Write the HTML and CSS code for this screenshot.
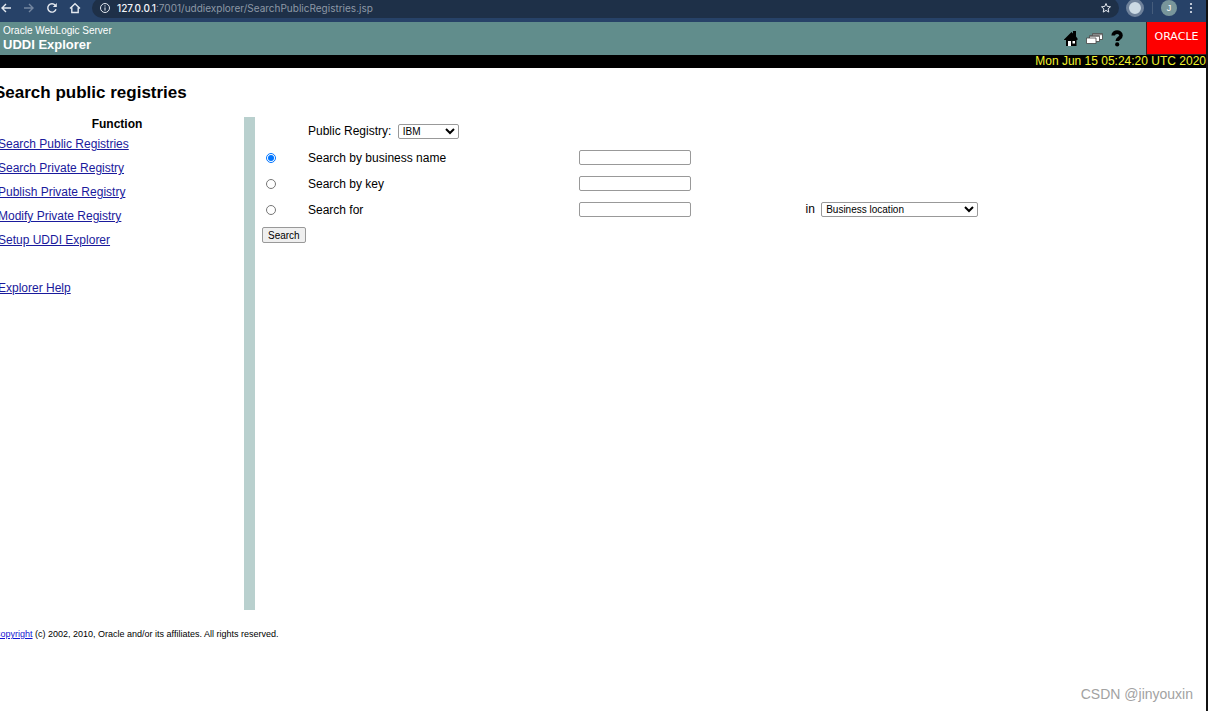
FILE: index.html
```html
<!DOCTYPE html>
<html lang="en">
<head>
<meta charset="utf-8">
<title>UDDI Explorer</title>
<link rel="stylesheet" href="styles.css">
</head>
<body>
<div class="window">
  <div class="toolbar">
    <div class="nav">
      <button type="button" class="tool" aria-label="Back"><svg viewBox="0 0 12 12"><path d="M11 6H2M6 2L2 6l4 4"/></svg></button>
      <button type="button" class="tool dim" aria-label="Forward"><svg viewBox="0 0 12 12"><path d="M1 6h9M6 2l4 4-4 4"/></svg></button>
      <button type="button" class="tool" aria-label="Reload"><svg viewBox="0 0 12 12"><path d="M10 7.2A4.2 4.2 0 1 1 9.2 3.2"/><path class="solid" d="M10.8 1v4H6.8z"/></svg></button>
      <button type="button" class="tool" aria-label="Home"><svg viewBox="0 0 12 12"><path d="M1 6.4L6 1.8l5 4.6M2.8 5.5v5h6.4v-5"/></svg></button>
    </div>
    <div class="address">
      <svg class="info" viewBox="0 0 12 12"><circle cx="6" cy="6" r="4.5"/><path d="M6 5.4v3.2M6 3.3v1.2"/></svg>
      <span class="url"><span class="host">127.0.0.1</span>:7001/uddiexplorer/SearchPublicRegistries.jsp</span>
      <button type="button" class="tool star" aria-label="Bookmark"><svg viewBox="0 0 12 12"><path d="M6 1.5l1.3 3 3.2.3-2.4 2.1.7 3.2L6 8.4l-2.8 1.7.7-3.2L1.5 4.8l3.2-.3z"/></svg></button>
    </div>
    <div class="extras">
      <span class="extension"></span>
      <span class="divider"></span>
      <span class="avatar">J</span>
      <button type="button" class="tool" aria-label="Menu"><svg viewBox="0 0 12 12"><g class="dots"><circle cx="6" cy="2" r="1.1"/><circle cx="6" cy="6" r="1.1"/><circle cx="6" cy="10" r="1.1"/></g></svg></button>
    </div>
  </div>

  <header class="banner">
    <div class="brand">
      <div class="product">Oracle WebLogic Server</div>
      <div class="app">UDDI Explorer</div>
    </div>
    <div class="shortcuts">
      <a href="#" aria-label="Home"><svg viewBox="0 0 18 18"><path d="M2 9.500L9.500 2l1.500 1.500V1h3v5.500l1.500 2V10H14.500v6H4v-6H2z" fill="#000"/><path d="M6 11h3v5H6zM10.500 11h2.500v2.500h-2.500z" fill="#fff"/></svg></a>
      <a href="#" aria-label="Windows"><svg viewBox="0 0 18 18"><g stroke="#444" stroke-width=".8" fill="#fff"><path d="M7.500 3.500h10v6h-10z"/><path d="M4.500 5.500h10v6h-10z"/><path d="M1.500 8h9.500v5.500H1.500z"/></g><path d="M8 4h9v1.200H8zM5 6h9v1H5z" fill="#888"/></svg></a>
      <a href="#" aria-label="Help"><svg viewBox="0 0 18 18"><path d="M5.200 5.500C5.200 1 13 1 13 5.500c0 2.800-3.700 2.800-3.700 5.500" fill="none" stroke="#000" stroke-width="3.600"/><circle cx="9.200" cy="14.400" r="2.100"/></svg></a>
    </div>
    <div class="logo">ORACLE</div>
  </header>
  <div class="clock">Mon Jun 15 05:24:20 UTC 2020</div>

  <div class="page">
    <h1 class="title">Search public registries</h1>
    <div class="columns">
      <nav class="functions">
        <h2 class="functions-title">Function</h2>
        <a href="#">Search Public Registries</a>
        <a href="#">Search Private Registry</a>
        <a href="#">Publish Private Registry</a>
        <a href="#">Modify Private Registry</a>
        <a href="#">Setup UDDI Explorer</a>
        <a href="#" class="help">Explorer Help</a>
      </nav>
      <form class="search">
        <table class="fields">
          <colgroup><col class="c-radio"><col class="c-label"><col class="c-input"><col></colgroup>
          <tr>
            <td></td>
            <td><label for="registry">Public Registry:</label> <select id="registry" class="registry"><option>IBM</option></select></td>
            <td></td><td></td>
          </tr>
          <tr>
            <td><input type="radio" name="by" id="by-name" checked></td>
            <td><label for="by-name">Search by business name</label></td>
            <td><input type="text" class="box" aria-label="Business name"></td><td></td>
          </tr>
          <tr>
            <td><input type="radio" name="by" id="by-key"></td>
            <td><label for="by-key">Search by key</label></td>
            <td><input type="text" class="box" aria-label="Key"></td><td></td>
          </tr>
          <tr>
            <td><input type="radio" name="by" id="by-for"></td>
            <td><label for="by-for">Search for</label></td>
            <td><input type="text" class="box" aria-label="Search for"></td>
            <td><label for="place">in</label> <select id="place" class="place"><option>Business location</option></select></td>
          </tr>
        </table>
        <button type="button" class="submit">Search</button>
      </form>
    </div>
    <footer class="legal"><a href="#">Copyright</a> (c) 2002, 2010, Oracle and/or its affiliates. All rights reserved.</footer>
  </div>
  <div class="credit">CSDN @jinyouxin</div>
</div>
</body>
</html>
```

FILE: styles.css
```css
* { box-sizing: border-box; }
body {
  margin: 0;
  background: #fff;
  color: #000;
  font: 12px/14px "Liberation Sans", Arial, sans-serif;
  overflow-x: hidden;
}
.window {
  min-height: 100vh;
  display: flex;
  flex-direction: column;
  border-right: 2px solid #111;
}

/* Browser toolbar */
.toolbar {
  display: flex;
  align-items: center;
  height: 22px;
  padding-bottom: 6px;
  background: #274268;
}
.nav { display: flex; gap: 11px; width: 92px; }
.tool {
  display: flex;
  flex: none;
  width: 12px;
  height: 12px;
  padding: 0;
  border: 0;
  background: none;
}
.tool svg, .info {
  width: 12px;
  height: 12px;
  fill: none;
  stroke: #e4e9f0;
  stroke-width: 1.4;
}
.tool .solid, .tool .dots { fill: #e4e9f0; stroke: none; }
.tool.dim svg { stroke: #7486a0; }
.tool.star svg { stroke-width: 1; }
.address {
  flex: 1;
  display: flex;
  align-items: center;
  gap: 6px;
  height: 20px;
  padding: 0 7px;
  border-radius: 10px;
  background: #1e3048;
}
.info { stroke-width: 1; }
.url {
  flex: 1;
  color: #8d98a6;
  font: 10px/14px Inter, Roboto, sans-serif;
}
.host { color: #f2f4f7; font-weight: 500; }
.extras { display: flex; align-items: center; gap: 8px; padding: 0 9px 0 7px; }
.extension {
  width: 18px;
  height: 18px;
  border: 3px solid #6e819a;
  border-radius: 50%;
  background: #ccdae4;
}
.divider { width: 1px; height: 12px; background: #465d7c; }
.avatar {
  width: 16px;
  height: 16px;
  border-radius: 50%;
  background: #78969b;
  color: #fff;
  font-size: 9px;
  line-height: 16px;
  text-align: center;
}

/* Product banner */
.banner {
  display: flex;
  height: 33px;
  background: #618d8c;
  color: #fff;
}
.brand { flex: 1; padding: 2px 3px; }
.product { font-size: 10px; line-height: 13px; }
.app { font-size: 13px; line-height: 15px; font-weight: bold; }
.shortcuts { display: flex; align-items: center; gap: 5px; padding-right: 20px; }
.shortcuts a, .shortcuts svg { display: block; width: 18px; height: 18px; }
.logo {
  width: 60px;
  border: 1px solid #3b2020;
  border-width: 0 0 1px 1px;
  background: #fe0000;
  font: 11px/30px "DejaVu Sans", sans-serif;
  text-align: center;
}
.clock {
  height: 13px;
  background: #000;
  color: #f2f22c;
  line-height: 13px;
  text-align: right;
}

/* Page content */
.page { flex: 1; margin-left: -6px; }
.title { margin: 14px 0; font-size: 17px; line-height: 21px; }
.columns { display: flex; min-height: 493px; }
.functions {
  display: flex;
  flex-direction: column;
  align-items: flex-start;
  gap: 10px;
  width: 250px;
  padding: 0 8px 0 4px;
}
.functions-title {
  align-self: center;
  margin: 0 0 -4px;
  font-size: 12px;
  line-height: 14px;
}
.functions a { color: #1a1a9c; }
.functions .help { margin-top: 24px; }
.search { flex: 1; border-left: 11px solid #b9d0ce; padding: 1px 0 0 7px; }
.fields { width: 100%; table-layout: fixed; border-collapse: collapse; }
.fields td { height: 26px; padding: 0; }
.fields label { vertical-align: middle; }
.c-radio { width: 46px; }
.c-label { width: 28.7%; }
.c-input { width: 24%; }
.fields input[type="radio"] {
  display: block;
  width: 10px;
  height: 10px;
  margin: 2px 4px 0;
}
.box, .registry, .place, .submit {
  height: 15px;
  padding: 0;
  border: 1px solid #999;
  border-radius: 2px;
  background: #fff;
  color: #000;
  font: 10px/13px "Liberation Sans", Arial, sans-serif;
  vertical-align: middle;
}
.box { display: block; width: 112px; }
.registry { width: 61px; margin-left: 3px; }
.place { width: 157px; margin-left: 3px; }
.submit { display: block; margin-top: 5px; height: 16px; padding: 0 5px; background: #efefef; }
.legal { margin-top: 18px; font-size: 9px; line-height: 12px; }
.legal a { color: #1414d2; }
.credit {
  padding: 0 13px 9px;
  color: #a2a2a2;
  font-size: 14px;
  line-height: 16px;
  text-align: right;
}
```
